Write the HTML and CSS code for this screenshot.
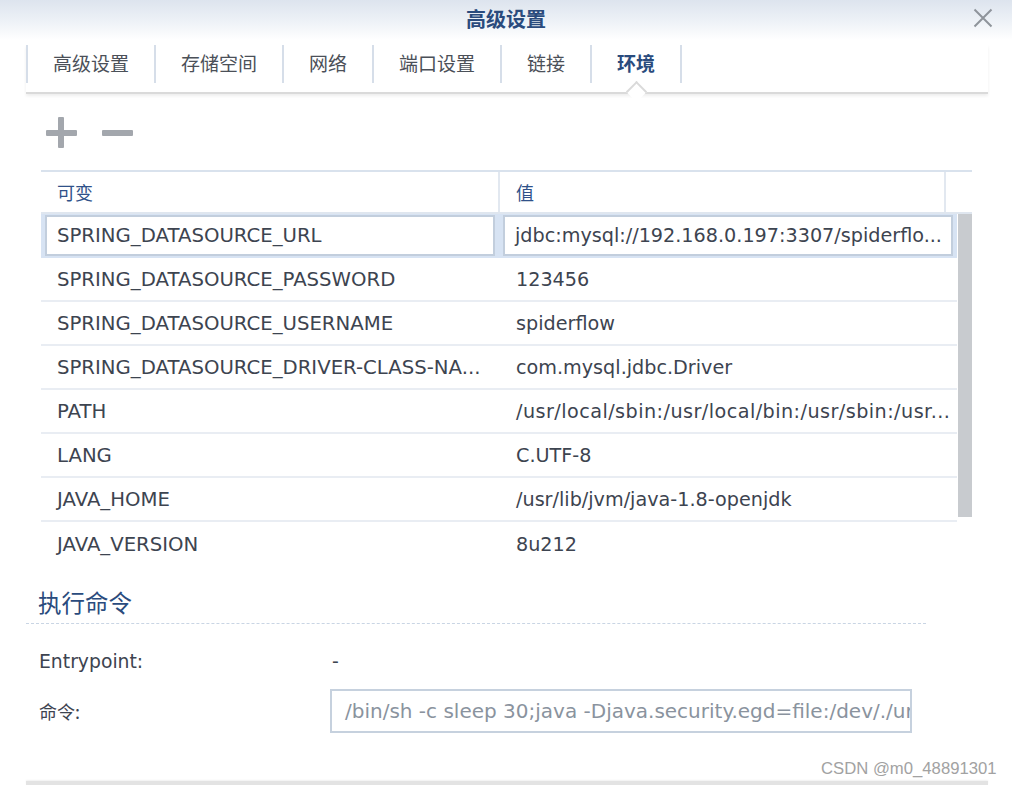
FILE: index.html
```html
<!DOCTYPE html>
<html lang="zh-CN">
<head>
<meta charset="utf-8">
<title>高级设置</title>
<link rel="stylesheet" href="styles.css">
</head>
<body>
<div class="window">
  <header class="titlebar">
    <span class="spacer"></span>
    <h1 class="title">高级设置</h1>
    <span class="close" aria-label="关闭">
      <svg width="20" height="20" viewBox="0 0 20 20"><path d="M1.5 1.5 L18.5 18.5 M18.5 1.5 L1.5 18.5" stroke="#8f949b" stroke-width="2" fill="none"/></svg>
    </span>
  </header>

  <nav class="tabbar">
    <div class="tabs">
      <div class="tab w128">高级设置</div>
      <div class="tab w128">存储空间</div>
      <div class="tab w90">网络</div>
      <div class="tab w128">端口设置</div>
      <div class="tab w90">链接</div>
      <div class="tab w92 active">环境</div>
    </div>
  </nav>

  <div class="toolbar">
    <span class="btn-plus" aria-label="新增"></span>
    <span class="btn-minus" aria-label="删除"></span>
  </div>

  <div class="grid">
    <div class="grid-head">
      <div class="hcell">可变</div>
      <div class="hcell">值</div>
      <div class="hcell last"></div>
    </div>
    <div class="grid-body">
      <div class="rows">
        <div class="row selected">
          <div class="cell key"><span class="box">SPRING_DATASOURCE_URL</span></div>
          <div class="cell val"><span class="box">jdbc:mysql://192.168.0.197:3307/spiderflo...</span></div>
        </div>
        <div class="row">
          <div class="cell key">SPRING_DATASOURCE_PASSWORD</div>
          <div class="cell val">123456</div>
        </div>
        <div class="row">
          <div class="cell key">SPRING_DATASOURCE_USERNAME</div>
          <div class="cell val">spiderflow</div>
        </div>
        <div class="row">
          <div class="cell key">SPRING_DATASOURCE_DRIVER-CLASS-NA...</div>
          <div class="cell val">com.mysql.jdbc.Driver</div>
        </div>
        <div class="row">
          <div class="cell key">PATH</div>
          <div class="cell val wide">/usr/local/sbin:/usr/local/bin:/usr/sbin:/usr...</div>
        </div>
        <div class="row">
          <div class="cell key">LANG</div>
          <div class="cell val">C.UTF-8</div>
        </div>
        <div class="row">
          <div class="cell key">JAVA_HOME</div>
          <div class="cell val">/usr/lib/jvm/java-1.8-openjdk</div>
        </div>
        <div class="row nolast">
          <div class="cell key">JAVA_VERSION</div>
          <div class="cell val">8u212</div>
        </div>
      </div>
      <div class="scrollbar"><div class="thumb"></div></div>
    </div>
  </div>

  <section class="cmd">
    <h2 class="cmd-title">执行命令</h2>
    <div class="form">
      <div class="label">Entrypoint:</div>
      <div class="value dash">-</div>
      <div class="label cmdlabel">命令:</div>
      <div class="value"><div class="input">/bin/sh -c sleep 30;java -Djava.security.egd=file:/dev/./urandom -jar /spider-flow.jar</div></div>
    </div>
  </section>

  <div class="footer-line"></div>
  <div class="watermark">CSDN @m0_48891301</div>
</div>
</body>
</html>
```

FILE: styles.css
```css
* { box-sizing: border-box; }
html, body {
  margin: 0;
  padding: 0;
  background: #ffffff;
}
body {
  width: 1012px;
  height: 786px;
  overflow: hidden;
  font-family: "DejaVu Sans", "Noto Sans CJK SC", sans-serif;
  color: #3d4450;
}
.window {
  position: relative;
  width: 1012px;
  height: 786px;
}

/* title bar */
.titlebar {
  height: 40px;
  display: grid;
  grid-template-columns: 1fr auto 1fr;
  align-items: center;
  background: linear-gradient(#dde4ee 0%, #eef2f7 55%, #ffffff 100%);
}
.title {
  margin: 0;
  font-family: "Noto Sans CJK SC", sans-serif;
  font-size: 20px;
  font-weight: 700;
  color: #2a4b7d;
  line-height: 36px;
  padding-bottom: 2px;
}
.close {
  justify-self: end;
  margin-right: 19px;
  margin-top: -4px;
  width: 20px;
  height: 20px;
  display: flex;
}

/* tabs */
.tabbar {
  margin: 5px 24px 0 26px;
  height: 49px;
  border-bottom: 2px solid #dadada;
  box-shadow: 0 2px 3px rgba(0, 0, 0, 0.07);
}
.tabs {
  display: flex;
  height: 38px;
  width: max-content;
}
.tab {
  height: 38px;
  display: flex;
  align-items: center;
  justify-content: center;
  padding-bottom: 3px;
  border-left: 2px solid #d6dee9;
  font-family: "Noto Sans CJK SC", sans-serif;
  font-size: 19px;
  color: #4b5058;
  position: relative;
}
.tab:last-child { border-right: 2px solid #d6dee9; }
.w128 { width: 128px; }
.w90 { width: 90px; }
.w92 { width: 92px; }
.tab.active {
  font-weight: 700;
  color: #2a4b7d;
}
.tab.active::after {
  content: "";
  position: absolute;
  left: 50%;
  bottom: -16px;
  width: 13px;
  height: 13px;
  margin-left: -7px;
  background: #ffffff;
  border-top: 2px solid #dadada;
  border-left: 2px solid #dadada;
  transform: rotate(45deg);
}

/* toolbar */
.toolbar {
  margin: 23px 0 0 46px;
  height: 31px;
  display: flex;
  gap: 25px;
}
.btn-plus, .btn-minus {
  position: relative;
  width: 31px;
  height: 31px;
  display: block;
}
.btn-plus::before, .btn-plus::after, .btn-minus::before {
  content: "";
  position: absolute;
  background: #a3a7ad;
  border-radius: 1px;
}
.btn-plus::before { left: 0; top: 13px; width: 31px; height: 6px; }
.btn-plus::after { left: 12px; top: 0; width: 6px; height: 31px; }
.btn-minus::before { left: 0; top: 13px; width: 31px; height: 6px; }

/* grid */
.grid {
  margin: 22px 0 0 41px;
  width: 931px;
}
.grid-head {
  display: grid;
  grid-template-columns: 459px 446px 26px;
  height: 44px;
  border-top: 2px solid #d9e2ed;
  border-bottom: 2px solid #dfe6ef;
}
.hcell {
  display: flex;
  align-items: center;
  padding-left: 16px;
  font-family: "Noto Sans CJK SC", sans-serif;
  font-size: 18px;
  color: #2f5189;
  border-right: 2px solid #e2e8f0;
}
.hcell.last { border-right: none; }
.grid-body {
  display: flex;
  gap: 1px;
}
.rows {
  width: 916px;
}
.row {
  display: grid;
  grid-template-columns: 459px 457px;
  height: 44px;
  border-bottom: 2px solid #e9edf3;
  white-space: nowrap;
}
.row.nolast { border-bottom: none; }
.cell {
  display: flex;
  align-items: center;
  padding-left: 16px;
  overflow: hidden;
}
.cell.key { font-size: 19.7px; }
.cell.val { font-size: 19.2px; }
.cell.val.wide { letter-spacing: 0.45px; }
.row.selected {
  background: #d7e3f3;
  border-bottom: none;
}
.row.selected .cell {
  padding: 1px 5px 2px 4px;
}
.row.selected .cell + .cell {
  padding: 1px 4px 2px 3px;
}
.box {
  display: flex;
  align-items: center;
  width: 100%;
  height: 100%;
  background: #ffffff;
  border: 2px solid #c2cedd;
  padding-left: 10px;
  overflow: hidden;
}
.row.selected .cell + .cell .box { padding-left: 10px; }
.scrollbar {
  width: 14px;
}
.thumb {
  height: 303px;
  background: #c8cbcf;
}

/* command section */
.cmd {
  margin: 22px 0 0 26px;
  width: 900px;
}
.cmd-title {
  margin: 0;
  padding: 0 0 7px 12px;
  height: 36px;
  line-height: 28px;
  font-family: "Noto Sans CJK SC", sans-serif;
  font-size: 23.5px;
  font-weight: 400;
  color: #2a4b7d;
  border-bottom: 1px dashed #c9d5e4;
}
.form {
  margin-top: 22px;
  padding-left: 13px;
  display: grid;
  grid-template-columns: 291px 582px;
  row-gap: 13px;
  align-items: center;
  font-size: 18.8px;
  color: #3d4450;
}
.label, .value {
  min-height: 30px;
  display: flex;
  align-items: center;
}
.label {
  font-family: "DejaVu Sans", "Noto Sans CJK SC", sans-serif;
}
.cmdlabel { font-family: "Noto Sans CJK SC", sans-serif; font-size: 18px; }
.dash { padding-left: 2px; }
.input {
  width: 582px;
  height: 44px;
  border: 2px solid #c6d1de;
  padding-left: 13px;
  display: flex;
  align-items: center;
  white-space: nowrap;
  overflow: hidden;
  color: #8a939e;
  font-size: 20px;
}

.footer-line {
  margin: 48px 24px 0 26px;
  height: 4px;
  background: #e3e3e3;
  box-shadow: 0 -1px 2px rgba(0, 0, 0, 0.06);
}
.watermark {
  position: absolute;
  left: 821px;
  top: 759px;
  font-family: "Liberation Sans", sans-serif;
  font-size: 16.7px;
  color: #a2a2a2;
  white-space: nowrap;
}
```
